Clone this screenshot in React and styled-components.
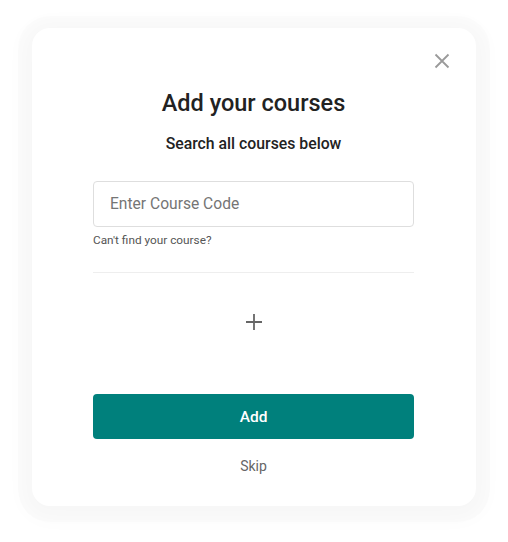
import React from 'react';
import styled, { createGlobalStyle } from 'styled-components';

const GlobalStyle = createGlobalStyle`
  body {
    margin: 0;
    background: #ffffff;
    font-family: Roboto, "Liberation Sans", sans-serif;
  }
`

const Page = styled.div`
  padding: 28px 32px 36px 32px;
`

const Card = styled.div`
  position: relative;
  width: 444px;
  box-sizing: border-box;
  padding: 61px 62px 31px 61px;
  background: #ffffff;
  border-radius: 18px;
  box-shadow: 0 2px 0 14px rgba(0, 0, 0, 0.012), 0 4px 20px 10px rgba(0, 0, 0, 0.022);
  display: flex;
  flex-direction: column;
  align-items: stretch;
`

const Close = styled.button`
  position: absolute;
  top: 24px;
  right: 25px;
  width: 18px;
  height: 18px;
  padding: 0;
  border: none;
  background: none;
  display: flex;
  align-items: center;
  justify-content: center;
`

const Title = styled.h1`
  margin: 0;
  font-size: 23.5px;
  line-height: 28px;
  font-weight: 500;
  color: #222222;
  text-align: center;
`

const Subtitle = styled.h2`
  margin: 17px 0 0 0;
  font-size: 15.8px;
  line-height: 20px;
  font-weight: 500;
  color: #222222;
  text-align: center;
`

const Input = styled.input`
  margin-top: 27px;
  height: 46px;
  box-sizing: border-box;
  padding: 0 16px;
  border: 1px solid #dedede;
  border-radius: 4px;
  font-family: inherit;
  font-size: 15.6px;
  color: #333;
  outline: none;

  &::placeholder {
    color: #757575;
  }
`

const Hint = styled.div`
  margin-top: 6px;
  font-size: 11.8px;
  line-height: 14px;
  color: #555555;
`

const Divider = styled.hr`
  margin: 25px 0 0 0;
  border: none;
  border-top: 1px solid #eeeeee;
`

const PlusButton = styled.button`
  margin: 39px auto 0 auto;
  width: 20px;
  height: 20px;
  padding: 0;
  border: none;
  background: none;
  display: flex;
  align-items: center;
  justify-content: center;
`

const Primary = styled.button`
  margin-top: 62px;
  height: 45px;
  border: none;
  border-radius: 4px;
  background: #00807c;
  color: #ffffff;
  font-family: inherit;
  font-size: 15.5px;
  font-weight: 500;
`

const Skip = styled.button`
  margin: 18px auto 0 auto;
  padding: 0;
  border: none;
  background: none;
  font-family: inherit;
  font-size: 14px;
  line-height: 18px;
  color: #666666;
`

const App = () => (
  <>
    <GlobalStyle />
    <Page>
      <Card>
        <Close aria-label="Close">
          <svg width="16" height="16" viewBox="0 0 16 16">
            <path d="M1.5 1.5 L14.5 14.5 M14.5 1.5 L1.5 14.5" stroke="#9a9a9a" strokeWidth="1.8" />
          </svg>
        </Close>
        <Title>Add your courses</Title>
        <Subtitle>Search all courses below</Subtitle>
        <Input placeholder="Enter Course Code" />
        <Hint>Can't find your course?</Hint>
        <Divider />
        <PlusButton aria-label="Add course">
          <svg width="18" height="18" viewBox="0 0 18 18">
            <path d="M9 1 V17 M1 9 H17" stroke="#666666" strokeWidth="1.8" />
          </svg>
        </PlusButton>
        <Primary>Add</Primary>
        <Skip>Skip</Skip>
      </Card>
    </Page>
  </>
);

export default App;
